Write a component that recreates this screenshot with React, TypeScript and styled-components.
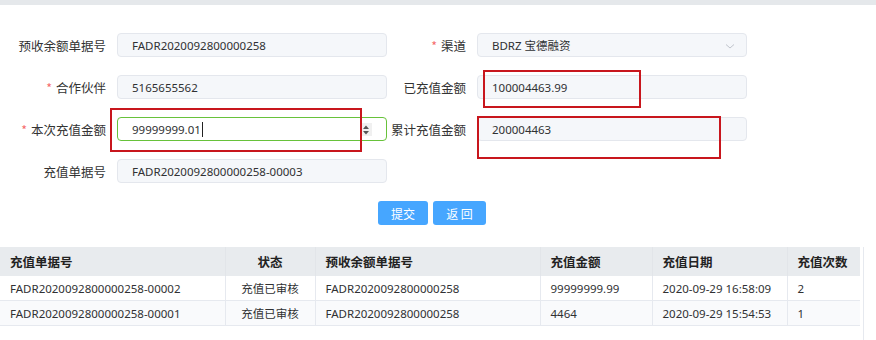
import React from 'react'
import styled, { createGlobalStyle, css } from 'styled-components'

const GlobalStyle = createGlobalStyle`
  html, body {
    margin: 0;
    padding: 0;
    background: #ffffff;
  }
  body {
    font-family: "Noto Sans", "Noto Sans CJK SC", sans-serif;
    color: #333333;
  }
`

type Field = {
  label: string
  value: string
  required?: boolean
  kind?: 'readonly' | 'select' | 'number' | 'none'
}

const rows: Field[][] = [
  [
    { label: '预收余额单据号', value: 'FADR2020092800000258' },
    { label: '渠道', value: 'BDRZ 宝德融资', required: true, kind: 'select' },
  ],
  [
    { label: '合作伙伴', value: '5165655562', required: true },
    { label: '已充值金额', value: '100004463.99' },
  ],
  [
    { label: '本次充值金额', value: '99999999.01', required: true, kind: 'number' },
    { label: '累计充值金额', value: '200004463' },
  ],
  [
    { label: '充值单据号', value: 'FADR2020092800000258-00003' },
    { label: '', value: '', kind: 'none' },
  ],
]

const columns = [
  { title: '充值单据号', width: 225, center: false },
  { title: '状态', width: 90, center: true },
  { title: '预收余额单据号', width: 225, center: false },
  { title: '充值金额', width: 112, center: false },
  { title: '充值日期', width: 135, center: false },
  { title: '充值次数', width: 73, center: false },
]

const records = [
  ['FADR2020092800000258-00002', '充值已审核', 'FADR2020092800000258', '99999999.99', '2020-09-29 16:58:09', '2'],
  ['FADR2020092800000258-00001', '充值已审核', 'FADR2020092800000258', '4464', '2020-09-29 15:54:53', '1'],
]

// red annotation frames drawn over the form
const marks = [
  { left: 110, top: 108, width: 252, height: 44 },
  { left: 483, top: 70, width: 158, height: 38 },
  { left: 477, top: 116, width: 244, height: 43 },
]

export default function App() {
  return (
    <Page>
      <GlobalStyle />
      <TopBar />
      <Form>
        {rows.map((row, i) =>
          row.map((f, j) => (
            <React.Fragment key={`${i}-${j}`}>
              <Label>
                {f.required && <Star>*</Star>}
                {f.label}
              </Label>
              {f.kind === 'none' ? (
                <span />
              ) : (
                <Input $active={f.kind === 'number'}>
                  <span>{f.value}</span>
                  {f.kind === 'number' && <Caret />}
                  {f.kind === 'select' && (
                    <Chevron viewBox="0 0 12 12">
                      <path d="M2 4.5 L6 8 L10 4.5" fill="none" stroke="#c0c4cc" strokeWidth="1" />
                    </Chevron>
                  )}
                  {f.kind === 'number' && (
                    <Spinner>
                      <svg width="8" height="12" viewBox="0 0 8 12">
                        <path d="M4 1.5 L7 5 H1 Z" fill="#555" />
                        <path d="M4 10.5 L7 7 H1 Z" fill="#555" />
                      </svg>
                    </Spinner>
                  )}
                </Input>
              )}
            </React.Fragment>
          ))
        )}
      </Form>
      <Actions>
        <Button $w={50}>提交</Button>
        <Button $w={53}>返&nbsp;回</Button>
      </Actions>
      <TableWrap>
        <Table>
          <thead>
            <tr>
              {columns.map((c) => (
                <Th key={c.title} $center={c.center} style={{ width: c.width }}>
                  {c.title}
                </Th>
              ))}
            </tr>
          </thead>
          <tbody>
            {records.map((r, i) => (
              <Tr key={r[0]} $striped={i % 2 === 1}>
                {r.map((cell, k) => (
                  <Td key={k} $center={columns[k].center}>
                    {cell}
                  </Td>
                ))}
              </Tr>
            ))}
          </tbody>
        </Table>
      </TableWrap>
      {marks.map((m, i) => (
        <Mark key={i} style={{ left: m.left, top: m.top, width: m.width, height: m.height }} />
      ))}
    </Page>
  )
}

const Page = styled.div`
  position: relative;
  width: 876px;
  height: 340px;
  overflow: hidden;
`

const TopBar = styled.div`
  height: 5px;
  background: #e5e8eb;
`

const Form = styled.div`
  display: grid;
  grid-template-columns: 117px 270px 90px 270px;
  grid-auto-rows: 24px;
  row-gap: 18px;
  align-items: center;
  margin-top: 28px;
`

const Label = styled.label`
  text-align: right;
  padding-right: 11px;
  font-size: 12.5px;
  color: #333;
  white-space: nowrap;
  font-family: "Noto Sans CJK SC", sans-serif;
`

const Star = styled.span`
  color: #f56c6c;
  margin-right: 4px;
`

const Input = styled.div<{ $active?: boolean }>`
  position: relative;
  box-sizing: border-box;
  height: 24px;
  display: flex;
  align-items: center;
  padding: 0 14px;
  border-radius: 4px;
  font-size: 11.5px;
  color: #303133;
  ${({ $active }) =>
    $active
      ? css`
          background: #ffffff;
          border: 1px solid #67c23a;
        `
      : css`
          background: #f5f7fa;
          border: 1px solid #e4e7ed;
        `}
`

const Caret = styled.i`
  display: inline-block;
  width: 1px;
  height: 15px;
  background: #222;
  margin-left: 1px;
`

const Chevron = styled.svg`
  position: absolute;
  right: 10px;
  top: 6px;
  width: 12px;
  height: 12px;
`

const Spinner = styled.span`
  position: absolute;
  right: 14px;
  top: 5px;
  width: 12px;
  height: 13px;
  background: #f0f0f0;
  display: flex;
  align-items: center;
  justify-content: center;
`

const Actions = styled.div`
  display: flex;
  gap: 5px;
  margin: 18px 0 0 378px;
`

const Button = styled.button<{ $w: number }>`
  width: ${({ $w }) => $w}px;
  height: 24px;
  border: none;
  border-radius: 3px;
  background: #46a6ff;
  color: #ffffff;
  font-size: 12px;
  font-family: "Noto Sans CJK SC", sans-serif;
  padding: 0;
`

const TableWrap = styled.div`
  margin-top: 22px;
  width: 863px;
  height: 100px;
  border-right: 1px solid #e6e9ef;
`

const Table = styled.table`
  width: 860px;
  border-collapse: collapse;
  table-layout: fixed;
  font-size: 11.5px;
`

const Th = styled.th<{ $center?: boolean }>`
  height: 29px;
  padding: 0 10px;
  background: #e8ebee;
  font-size: 12.5px;
  font-weight: 700;
  color: #222;
  text-align: ${({ $center }) => ($center ? 'center' : 'left')};
  border-right: 1px solid #e2e5e9;
  box-sizing: border-box;
  white-space: nowrap;
  &:last-child {
    border-right: none;
  }
`

const Tr = styled.tr<{ $striped?: boolean }>`
  background: ${({ $striped }) => ($striped ? '#f9fafc' : '#ffffff')};
`

const Td = styled.td<{ $center?: boolean }>`
  height: 24px;
  padding: 0 10px;
  color: #303133;
  text-align: ${({ $center }) => ($center ? 'center' : 'left')};
  border-right: 1px solid #e6e9ef;
  border-bottom: 1px solid #e6e9ef;
  white-space: nowrap;
  &:last-child {
    border-right: none;
  }
`

const Mark = styled.div`
  position: absolute;
  box-sizing: border-box;
  border: 2px solid #c8161d;
  pointer-events: none;
`
